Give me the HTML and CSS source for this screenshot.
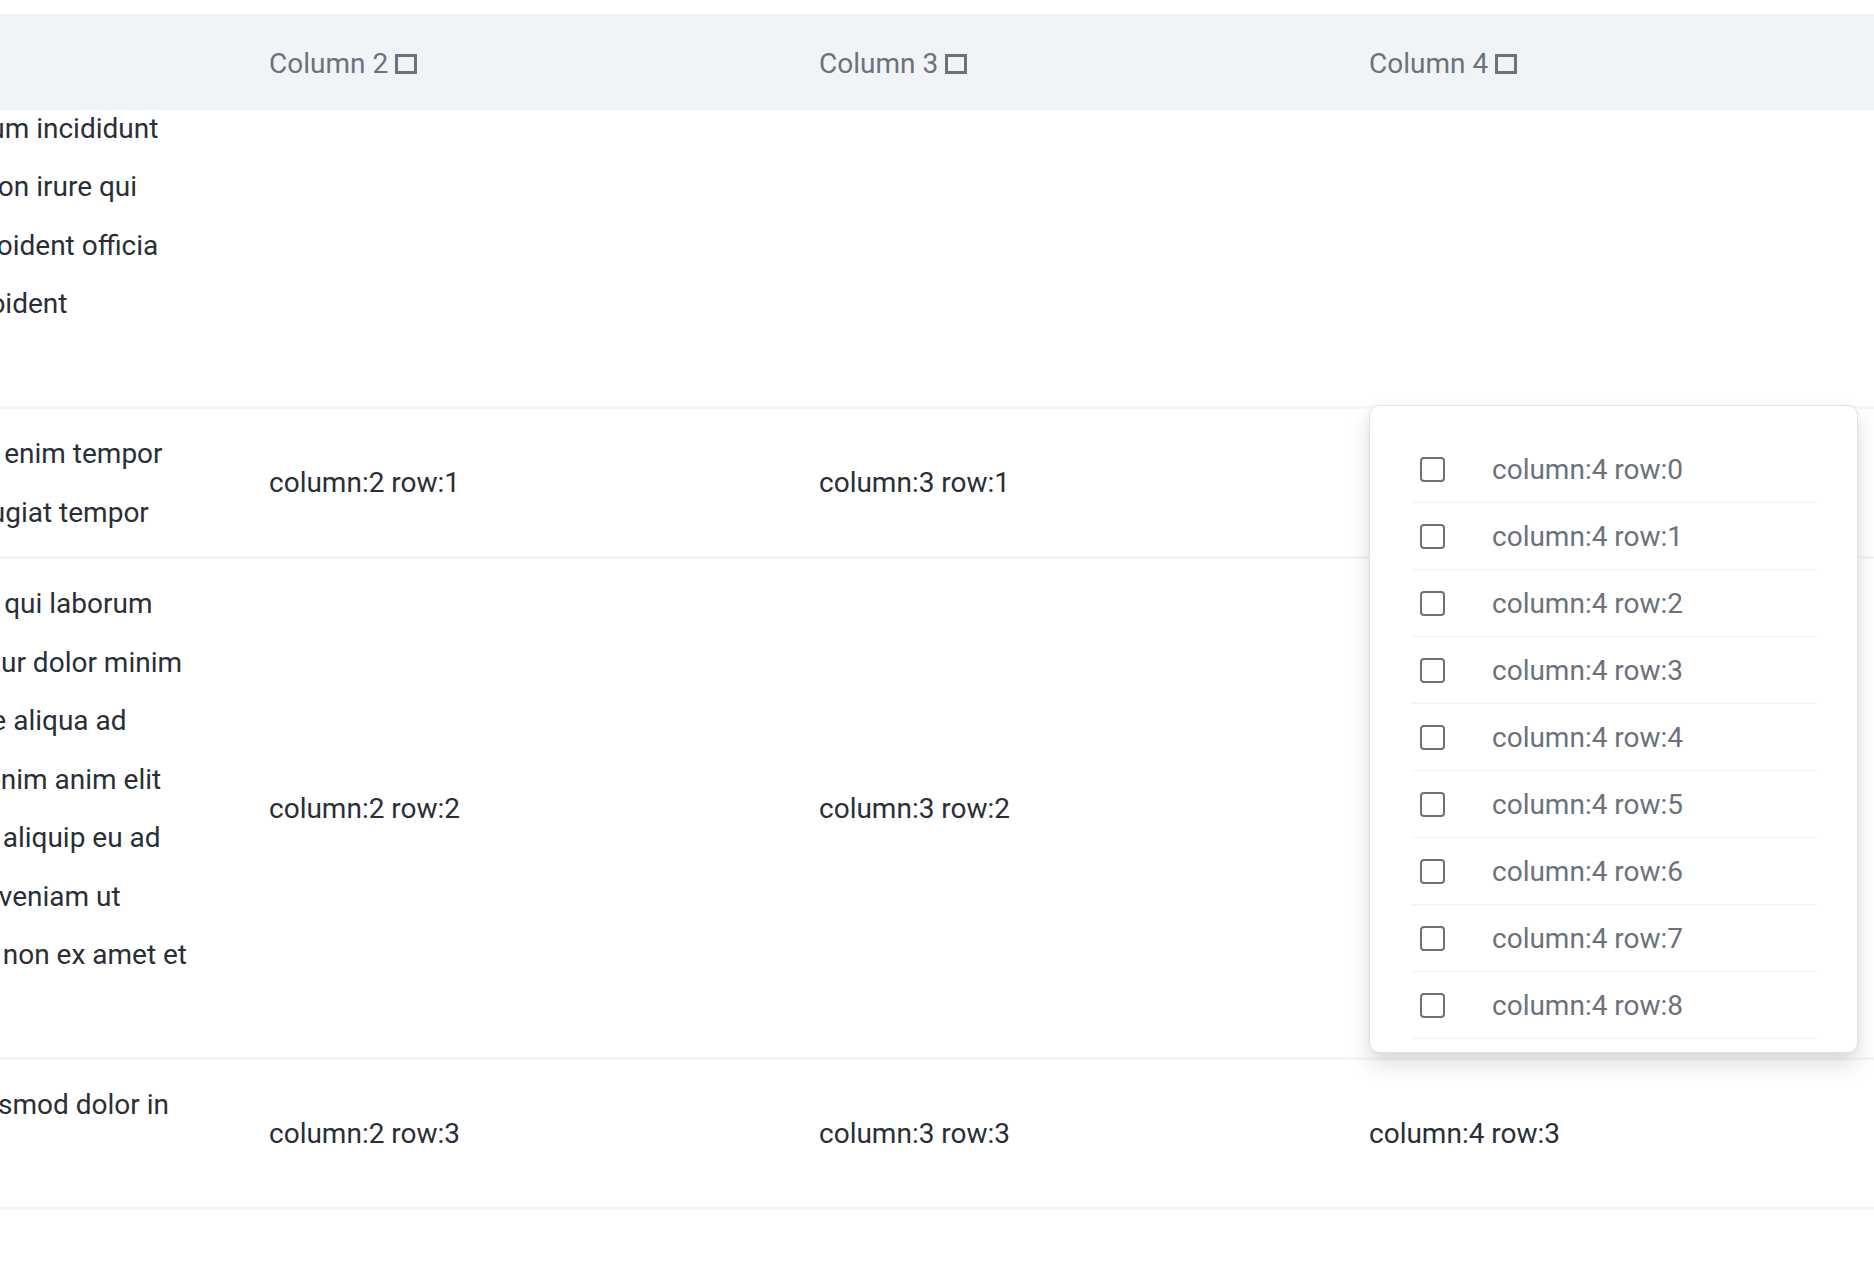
FILE: index.html
```html
<!DOCTYPE html>
<html lang="en">
<head>
  <meta charset="UTF-8" />
  <meta name="viewport" content="width=device-width, initial-scale=1" />
  <link rel="stylesheet" href="styles.css">
</head>
<body>
  <div class="page">
    <div class="scroller" id="scroller">
      <div class="table-wrap">
        <table class="grid">
          <colgroup>
            <col class="col"><col class="col"><col class="col"><col class="col">
          </colgroup>
          <thead>
            <tr>
              <th>Column 1 <span class="sort"></span></th>
              <th>Column 2 <span class="sort"></span></th>
              <th>Column 3 <span class="sort"></span></th>
              <th>Column 4 <span class="sort"></span></th>
            </tr>
          </thead>
          <tbody>
            <tr>
              <td class="text">Lorem ipsum dolor sit amet culpa<br>tempor velit esse cillum dolore<br>nulla pariatur excepteur sint<br>occaecat cupidatat non proident<br>deserunt mollit anim id est<br>laborum sed ut perspiciatis<br>commodo sunt sit ipsum incididunt<br>commodo dolor velit non irure qui<br>cupidatat non culpa proident officia<br>ullamco sit amet et proident<br>ea velit</td>
              <td>column:2 row:0</td>
              <td>column:3 row:0</td>
              <td>column:4 row:0</td>
            </tr>
            <tr>
              <td class="text">Esse aliquip dolor velit enim tempor<br>dolore magna aliqua fugiat tempor</td>
              <td>column:2 row:1</td>
              <td>column:3 row:1</td>
              <td>column:4 row:1</td>
            </tr>
            <tr>
              <td class="text">Esse aliquip dolor velit qui laborum<br>excepteur in consectetur dolor minim<br>veniam culpa sit labore aliqua ad<br>commodo dolor aute enim anim elit<br>occaecat culpa velit id aliquip eu ad<br>occaecat dolor velit id veniam ut<br>sunt aliquip dolor aute non ex amet et<br>commodo.</td>
              <td>column:2 row:2</td>
              <td>column:3 row:2</td>
              <td>column:4 row:2</td>
            </tr>
            <tr>
              <td class="text">Culpa aute dolor et eiusmod dolor in<br>nulla.</td>
              <td>column:2 row:3</td>
              <td>column:3 row:3</td>
              <td>column:4 row:3</td>
            </tr>
          </tbody>
        </table>
      </div>
    </div>

    <div class="popover">
      <ul class="check-list">
        <li><span class="check"></span><span class="label">column:4 row:0</span></li>
        <li><span class="check"></span><span class="label">column:4 row:1</span></li>
        <li><span class="check"></span><span class="label">column:4 row:2</span></li>
        <li><span class="check"></span><span class="label">column:4 row:3</span></li>
        <li><span class="check"></span><span class="label">column:4 row:4</span></li>
        <li><span class="check"></span><span class="label">column:4 row:5</span></li>
        <li><span class="check"></span><span class="label">column:4 row:6</span></li>
        <li><span class="check"></span><span class="label">column:4 row:7</span></li>
        <li><span class="check"></span><span class="label">column:4 row:8</span></li>
      </ul>
    </div>
  </div>

  <script>
    // table is scrolled down/right, header stays on top
    const scroller = document.getElementById("scroller");
    scroller.scrollTop = 378;
    scroller.scrollLeft = 305;
  </script>
</body>
</html>
```

FILE: styles.css
```css
html, body {
  margin: 0;
  padding: 0;
  background: #fff;
  font-family: Roboto, 'Liberation Sans', sans-serif;
  overflow: hidden;
}
.page {
  position: relative;
  padding-top: 14px;
  height: 100vh;
  box-sizing: border-box;
}
.scroller {
  height: 100%;
  overflow: hidden;
}
.table-wrap {
  padding-bottom: 160px;
}
.grid {
  width: 2200px;
  table-layout: fixed;
  border-collapse: separate;
  border-spacing: 0;
  font-size: 28px;
  line-height: 58.5px;
}
.col { width: 550px; }

.grid th {
  position: sticky;
  top: 0;
  z-index: 1;
  background: #f1f4f7;
  color: #6b727b;
  font-weight: normal;
  text-align: left;
  padding: 21px 24px 16.5px;
  white-space: nowrap;
}
.sort {
  display: inline-block;
  width: 22px;
  height: 20px;
  border: 3px solid #6b727b;
  box-sizing: border-box;
  vertical-align: -1px;
}
.grid td {
  padding: 16.5px 24px 13.5px;
  color: #2a2f37;
  vertical-align: middle;
  border-bottom: 3px solid #f5f6f8;
  white-space: nowrap;
}

.popover {
  position: absolute;
  top: 405px;
  left: 1369px;
  width: 489px;
  box-sizing: border-box;
  background: #fff;
  border: 1px solid #dfe2e6;
  border-radius: 10px;
  box-shadow: 0 12px 22px rgba(0,0,0,0.13), 0 2px 5px rgba(0,0,0,0.05);
  padding: 30px 39px 13px 42px;
}
.check-list {
  list-style: none;
  margin: 0;
  padding: 0;
}
.check-list li {
  display: flex;
  align-items: center;
  height: 66px;
  border-bottom: 1px solid #f1f2f4;
  padding-left: 8px;
  font-size: 28px;
  color: #6b727b;
}
.check {
  width: 25px;
  height: 25px;
  border: 2px solid #6c727b;
  border-radius: 4px;
  box-sizing: border-box;
  flex-shrink: 0;
}
.label {
  margin-left: 47px;
}
```
